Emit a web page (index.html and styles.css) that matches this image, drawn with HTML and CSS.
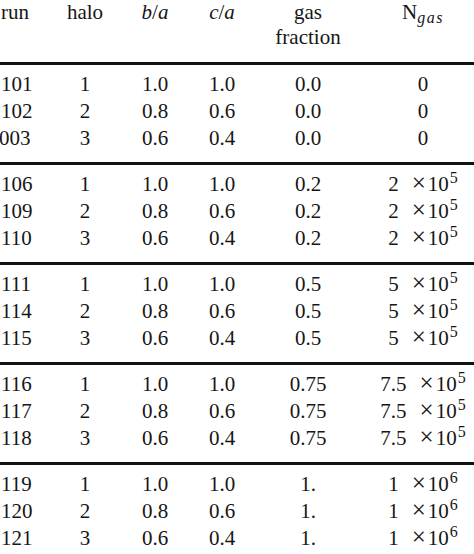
FILE: index.html
```html
<!DOCTYPE html>
<html>
<head>
<meta charset="utf-8">
<link rel="stylesheet" href="styles.css">
</head>
<body>
<div class="table">
  <div class="head">
    <div class="c c1">run</div>
    <div class="c">halo</div>
    <div class="c"><i>b</i>/<i>a</i></div>
    <div class="c"><i>c</i>/<i>a</i></div>
    <div class="c">gas</div>
    <div class="c n">N<sub><i>gas</i></sub></div>
    <div class="c second">fraction</div>
  </div>

  <div class="group">
    <div class="c c1">101</div><div class="c">1</div><div class="c">1.0</div><div class="c">1.0</div><div class="c">0.0</div><div class="c n">0</div>
    <div class="c c1">102</div><div class="c">2</div><div class="c">0.8</div><div class="c">0.6</div><div class="c">0.0</div><div class="c n">0</div>
    <div class="c c1 cut">003</div><div class="c">3</div><div class="c">0.6</div><div class="c">0.4</div><div class="c">0.0</div><div class="c n">0</div>
  </div>

  <div class="group">
    <div class="c c1">106</div><div class="c">1</div><div class="c">1.0</div><div class="c">1.0</div><div class="c">0.2</div><div class="c n">2<span class="gap"></span><span class="x">×</span><span class="gap2"></span>10<sup>5</sup></div>
    <div class="c c1">109</div><div class="c">2</div><div class="c">0.8</div><div class="c">0.6</div><div class="c">0.2</div><div class="c n">2<span class="gap"></span><span class="x">×</span><span class="gap2"></span>10<sup>5</sup></div>
    <div class="c c1">110</div><div class="c">3</div><div class="c">0.6</div><div class="c">0.4</div><div class="c">0.2</div><div class="c n">2<span class="gap"></span><span class="x">×</span><span class="gap2"></span>10<sup>5</sup></div>
  </div>

  <div class="group">
    <div class="c c1">111</div><div class="c">1</div><div class="c">1.0</div><div class="c">1.0</div><div class="c">0.5</div><div class="c n">5<span class="gap"></span><span class="x">×</span><span class="gap2"></span>10<sup>5</sup></div>
    <div class="c c1">114</div><div class="c">2</div><div class="c">0.8</div><div class="c">0.6</div><div class="c">0.5</div><div class="c n">5<span class="gap"></span><span class="x">×</span><span class="gap2"></span>10<sup>5</sup></div>
    <div class="c c1">115</div><div class="c">3</div><div class="c">0.6</div><div class="c">0.4</div><div class="c">0.5</div><div class="c n">5<span class="gap"></span><span class="x">×</span><span class="gap2"></span>10<sup>5</sup></div>
  </div>

  <div class="group">
    <div class="c c1">116</div><div class="c">1</div><div class="c">1.0</div><div class="c">1.0</div><div class="c">0.75</div><div class="c n">7.5<span class="gap"></span><span class="x">×</span><span class="gap2"></span>10<sup>5</sup></div>
    <div class="c c1">117</div><div class="c">2</div><div class="c">0.8</div><div class="c">0.6</div><div class="c">0.75</div><div class="c n">7.5<span class="gap"></span><span class="x">×</span><span class="gap2"></span>10<sup>5</sup></div>
    <div class="c c1">118</div><div class="c">3</div><div class="c">0.6</div><div class="c">0.4</div><div class="c">0.75</div><div class="c n">7.5<span class="gap"></span><span class="x">×</span><span class="gap2"></span>10<sup>5</sup></div>
  </div>

  <div class="group">
    <div class="c c1">119</div><div class="c">1</div><div class="c">1.0</div><div class="c">1.0</div><div class="c">1.</div><div class="c n">1<span class="gap"></span><span class="x">×</span><span class="gap2"></span>10<sup>6</sup></div>
    <div class="c c1">120</div><div class="c">2</div><div class="c">0.8</div><div class="c">0.6</div><div class="c">1.</div><div class="c n">1<span class="gap"></span><span class="x">×</span><span class="gap2"></span>10<sup>6</sup></div>
    <div class="c c1">121</div><div class="c">3</div><div class="c">0.6</div><div class="c">0.4</div><div class="c">1.</div><div class="c n">1<span class="gap"></span><span class="x">×</span><span class="gap2"></span>10<sup>6</sup></div>
  </div>
</div>
</body>
</html>
```

FILE: styles.css
```css
html, body {
  margin: 0;
  padding: 0;
  background: #ffffff;
  overflow: hidden;
}
body {
  width: 474px;
  height: 554px;
  font-family: "Liberation Serif", "Times New Roman", serif;
  font-size: 21px;
  line-height: 27px;
  color: #161616;
}
.head,
.group {
  display: grid;
  grid-template-columns: 50px 70px 70px 64px 108px 112px;
}
.head {
  padding-bottom: 11px;
}
.head .c {
  height: 24px;
  line-height: 24px;
}
.head .second {
  grid-column: 5;
  height: 27px;
  line-height: 27px;
}
.group {
  border-top: 3px solid #121212;
  padding: 6px 0 10px;
}
.c {
  text-align: center;
  white-space: nowrap;
  height: 27px;
}
.n {
  padding-left: 10px;
}
.c1 {
  text-align: left;
  padding-left: 1px;
}
.cut {
  margin-left: -2px;
}
i {
  font-style: italic;
}
sub {
  font-size: 16px;
  line-height: 0;
  vertical-align: -4px;
  letter-spacing: 1.5px;
}
sup {
  font-size: 16px;
  line-height: 0;
  vertical-align: 8px;
  margin-left: 1px;
}
.x {
  font-size: 25px;
  line-height: 0;
}
.gap {
  display: inline-block;
  width: 13px;
}
.gap2 {
  display: inline-block;
  width: 2px;
}
```
